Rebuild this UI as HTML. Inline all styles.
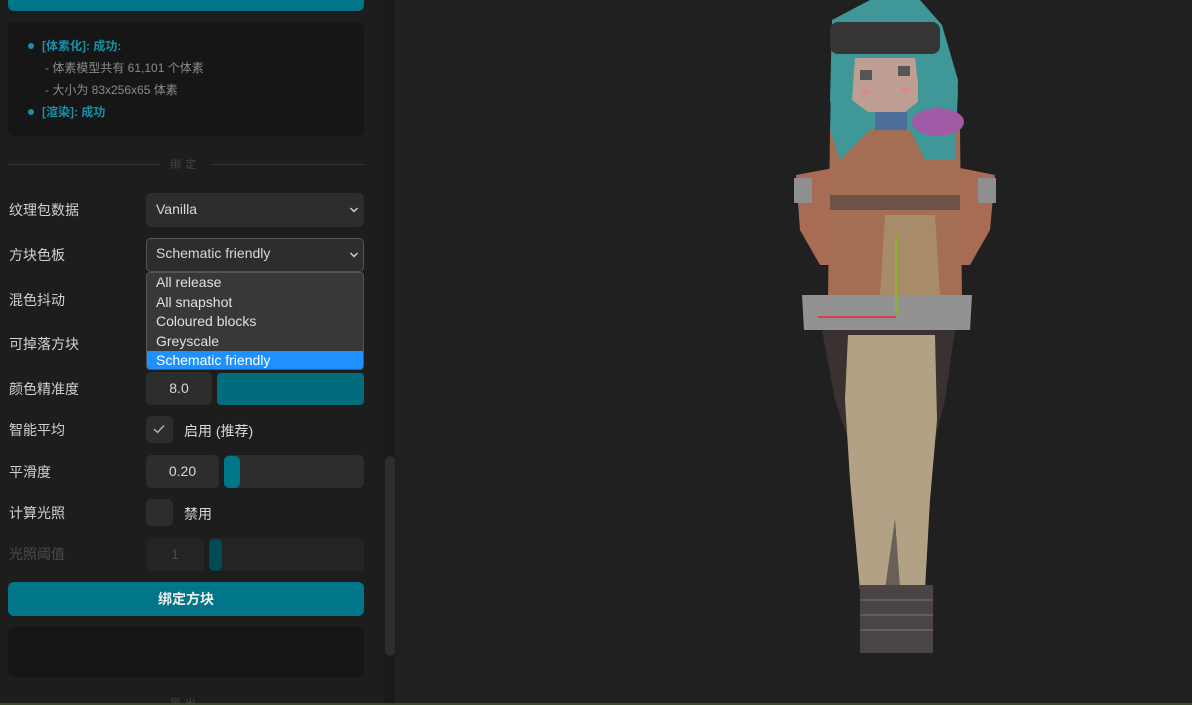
<!DOCTYPE html>
<html><head><meta charset="utf-8"><style>
*{box-sizing:border-box;margin:0;padding:0}
html,body{width:1192px;height:705px;overflow:hidden}
body{background:#202020;font-family:"Liberation Sans","Noto Sans CJK SC",sans-serif;position:relative;color:#d8d8d8}
.p{position:absolute}
.panel{left:0;top:0;width:385px;height:705px;background:#1d1d1d}
.lbl{position:absolute;left:9px;font-size:14px;color:#d0d0d0}
.ctl{position:absolute;background:#2d2d2d;border-radius:5px}
.teal{background:#007688}
</style></head><body>
<div class="p panel"></div>
<div class="p" style="left:385px;top:0;width:10px;height:705px;background:#191919"></div>
<div class="p" style="left:385px;top:456px;width:10px;height:200px;background:#2e2e2e;border-radius:5px"></div>
<div class="p teal" style="left:8px;top:-6px;width:356px;height:17px;border-radius:6px"></div>
<div class="p" style="left:8px;top:22px;width:356px;height:114px;background:#161616;border-radius:6px"></div>
<div class="p" style="left:28px;top:43px;width:6px;height:6px;border-radius:3px;background:#1a8fa6"></div>
<div class="p" style="left:42px;top:37px;font-size:12px;font-weight:bold;color:#1a8fa6">[体素化]: 成功:</div>
<div class="p" style="left:45px;top:59px;font-size:12px;color:#8a8a8a">- 体素模型共有 61,101 个体素</div>
<div class="p" style="left:45px;top:81px;font-size:12px;color:#8a8a8a">- 大小为 83x256x65 体素</div>
<div class="p" style="left:28px;top:109px;width:6px;height:6px;border-radius:3px;background:#1a8fa6"></div>
<div class="p" style="left:42px;top:103px;font-size:12px;font-weight:bold;color:#1a8fa6">[渲染]: 成功</div>
<div class="p" style="left:8px;top:164px;width:152px;height:1px;background:#333"></div>
<div class="p" style="left:212px;top:164px;width:152px;height:1px;background:#333"></div>
<div class="p" style="left:170px;top:156px;font-size:11px;color:#444;letter-spacing:4px">绑定</div>

<div class="lbl" style="top:200px">纹理包数据</div>
<div class="ctl" style="left:146px;top:193px;width:218px;height:34px"></div>
<div class="p" style="left:156px;top:201px;font-size:14px;color:#d8d8d8">Vanilla</div>
<svg class="p" style="left:349px;top:206px" width="10" height="8"><path d="M1.5 2 L5 5.5 L8.5 2" fill="none" stroke="#ccc" stroke-width="1.5"/></svg>

<div class="lbl" style="top:245px">方块色板</div>
<div class="ctl" style="left:146px;top:238px;width:218px;height:34px;border:1px solid #555"></div>
<div class="p" style="left:156px;top:245px;font-size:14px;color:#d8d8d8">Schematic friendly</div>
<svg class="p" style="left:349px;top:251px" width="10" height="8"><path d="M1.5 2 L5 5.5 L8.5 2" fill="none" stroke="#ccc" stroke-width="1.5"/></svg>
<div class="lbl" style="top:290px">混色抖动</div>
<div class="lbl" style="top:334px">可掉落方块</div>
<div class="p" style="left:146px;top:272px;width:218px;height:98px;background:#383838;border:1px solid #555;border-radius:4px;overflow:hidden;font-size:14px;color:#e0e0e0;line-height:19.5px">
<div style="padding-left:9px">All release</div>
<div style="padding-left:9px">All snapshot</div>
<div style="padding-left:9px">Coloured blocks</div>
<div style="padding-left:9px">Greyscale</div>
<div style="padding-left:9px;background:#1e90ff;color:#fff">Schematic friendly</div>
</div>

<div class="lbl" style="top:379px">颜色精准度</div>
<div class="ctl" style="left:146px;top:372px;width:66px;height:33px"></div>
<div class="p" style="left:146px;top:380px;width:66px;text-align:center;font-size:14px">8.0</div>
<div class="p" style="left:217px;top:373px;width:147px;height:32px;border-radius:4px;background:#006c7c"></div>

<div class="lbl" style="top:420px">智能平均</div>
<div class="ctl" style="left:146px;top:416px;width:27px;height:27px"></div>
<svg class="p" style="left:152px;top:423px" width="14" height="12"><path d="M2 6 L5.5 9.5 L12 2.5" fill="none" stroke="#bbb" stroke-width="1.3"/></svg>
<div class="p" style="left:184px;top:421px;font-size:14px">启用 (推荐)</div>

<div class="lbl" style="top:462px">平滑度</div>
<div class="ctl" style="left:146px;top:455px;width:73px;height:33px"></div>
<div class="p" style="left:146px;top:463px;width:73px;text-align:center;font-size:14px">0.20</div>
<div class="ctl" style="left:224px;top:455px;width:140px;height:33px"></div>
<div class="p teal" style="left:224px;top:456px;width:16px;height:32px;border-radius:5px"></div>

<div class="lbl" style="top:503px">计算光照</div>
<div class="ctl" style="left:146px;top:499px;width:27px;height:27px"></div>
<div class="p" style="left:184px;top:504px;font-size:14px">禁用</div>

<div class="lbl" style="top:544px;color:#4a4a4a">光照阈值</div>
<div class="ctl" style="left:146px;top:538px;width:58px;height:33px;background:#242424"></div>
<div class="p" style="left:146px;top:546px;width:58px;text-align:center;font-size:14px;color:#4a4a4a">1</div>
<div class="ctl" style="left:209px;top:538px;width:155px;height:33px;background:#242424"></div>
<div class="p" style="left:209px;top:539px;width:13px;height:32px;border-radius:5px;background:#004a55"></div>

<div class="p teal" style="left:8px;top:582px;width:356px;height:34px;border-radius:6px;text-align:center;line-height:34px;font-size:14px;font-weight:bold;color:#eee">绑定方块</div>
<div class="p" style="left:8px;top:627px;width:356px;height:50px;background:#161616;border-radius:6px"></div>
<div class="p" style="left:170px;top:695px;font-size:11px;color:#444;letter-spacing:4px">导出</div>
<div class="p" style="left:0;top:703px;width:1192px;height:2px;background:#3a4a2a"></div>

<svg class="p" style="left:0;top:0" width="1192" height="705">
<g>
<polygon points="822,330 955,330 945,400 930,460 855,460 835,400" fill="#3a3230"/>
<polygon points="848,335 935,335 937,420 930,500 925,590 900,590 895,520 885,590 860,590 850,480 845,400" fill="#b3a185"/>
<polygon points="895,520 900,590 885,590" fill="#6a6058"/>
<rect x="860" y="585" width="35" height="68" fill="#4a4444"/>
<rect x="895" y="585" width="38" height="68" fill="#4a4444"/>
<g stroke="#6a6464" stroke-width="1.5"><line x1="860" y1="600" x2="933" y2="600"/><line x1="860" y1="615" x2="933" y2="615"/><line x1="860" y1="630" x2="933" y2="630"/></g>
<polygon points="796,175 850,165 855,265 820,265 800,230" fill="#a86c55"/>
<polygon points="945,165 995,175 990,230 970,265 940,265" fill="#a86c55"/>
<rect x="794" y="178" width="18" height="25" fill="#8f8f8f"/>
<rect x="978" y="178" width="18" height="25" fill="#8f8f8f"/>
<polygon points="830,130 960,130 962,300 828,300" fill="#a46e55"/>
<rect x="830" y="195" width="130" height="15" fill="#6e5248"/>
<polygon points="885,215 935,215 940,295 880,295" fill="#a88c6a"/>
<polygon points="802,295 972,295 970,330 804,330" fill="#929292"/>
<polygon points="832,20 870,0 920,0 942,25 958,80 955,160 925,160 910,130 870,130 840,160 830,100" fill="#3f9797"/>
<rect x="830" y="22" width="110" height="32" rx="8" fill="#353535"/>
<polygon points="855,58 915,58 920,100 905,112 868,112 852,100" fill="#bf9f94"/>
<rect x="860" y="70" width="12" height="10" fill="#555"/>
<rect x="898" y="66" width="12" height="10" fill="#555"/>
<ellipse cx="866" cy="92" rx="5" ry="3" fill="#d88a90"/>
<ellipse cx="906" cy="90" rx="5" ry="3" fill="#d88a90"/>
<polygon points="832,55 852,55 852,130 840,160 830,130" fill="#3f9797"/>
<polygon points="918,55 945,60 958,90 955,160 925,160 918,120" fill="#3f9797"/>
<rect x="875" y="112" width="32" height="18" fill="#4b6f9a"/>
<ellipse cx="938" cy="122" rx="26" ry="14" fill="#a05aa6"/>
<line x1="896" y1="236" x2="896" y2="315" stroke="#8ab42a" stroke-width="2"/>
<line x1="818" y1="317" x2="896" y2="317" stroke="#d84050" stroke-width="2"/>
</g>
</svg>
</body></html>
